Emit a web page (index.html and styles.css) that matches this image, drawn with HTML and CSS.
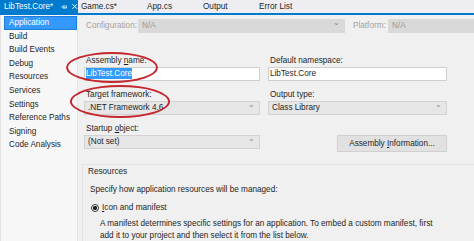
FILE: index.html
```html
<!DOCTYPE html>
<html lang="en">
<head>
    <meta charset="UTF-8">
    <title>LibTest.Core - Properties</title>
    <link rel="stylesheet" href="styles.css">
</head>
<body>

    <div class="tabs">
        <div class="tab active">
            <span>LibTest.Core*</span>
            <svg class="pin" width="8" height="6" viewBox="0 0 8 6"><path d="M0 3H3M3 1V5M3 1.5H7V4.5H3M3 3.5H7" stroke="#cfe6f7" stroke-width="1" fill="none"/></svg>
            <svg class="close" width="7" height="7" viewBox="0 0 7 7"><path d="M0.5 0.5L6.5 6.5M6.5 0.5L0.5 6.5" stroke="#fff" stroke-width="1.2"/></svg>
        </div>
        <div class="tab" style="width:65px">Game.cs*</div>
        <div class="tab" style="width:55px">App.cs</div>
        <div class="tab" style="width:55px">Output</div>
        <div class="tab">Error List</div>
    </div>

    <div class="main">
        <ul class="nav">
            <li class="selected">Application</li>
            <li>Build</li>
            <li>Build Events</li>
            <li>Debug</li>
            <li>Resources</li>
            <li>Services</li>
            <li>Settings</li>
            <li>Reference Paths</li>
            <li>Signing</li>
            <li>Code Analysis</li>
        </ul>

        <div class="content">
            <div class="config-row">
                <span class="dim config-label">Configuration:</span>
                <div class="combo disabled config-combo">N/A <span class="chev">&#8964;</span></div>
                <span class="dim platform-label">Platform:</span>
                <div class="combo disabled platform-combo">N/A</div>
            </div>

            <div class="form-grid">
                <div class="field">
                    <label>Assembly <u>n</u>ame:</label>
                    <div class="textbox"><span class="sel">LibTest.Core</span></div>
                </div>
                <div class="field">
                    <label>Default namespace:</label>
                    <div class="textbox">LibTest.Core</div>
                </div>
                <div class="field">
                    <label>Target framework:</label>
                    <div class="combo">.NET Framework 4.6 <span class="chev">&#8964;</span></div>
                </div>
                <div class="field">
                    <label>Output type:</label>
                    <div class="combo">Class Library <span class="chev">&#8964;</span></div>
                </div>
                <div class="field">
                    <label>Startup <u>o</u>bject:</label>
                    <div class="combo">(Not set) <span class="chev">&#8964;</span></div>
                </div>
                <div class="field button-cell">
                    <button>Assembly <u>I</u>nformation...</button>
                </div>
            </div>

            <div class="resources">
                <div class="group-title">Resources</div>
                <p class="lead">Specify how application resources will be managed:</p>
                <div class="radio-row">
                    <span class="radio"></span>
                    <span><u>I</u>con and manifest</span>
                </div>
                <p class="note">A manifest determines specific settings for an application. To embed a custom manifest, first<br>add it to your project and then select it from the list below.</p>
            </div>
        </div>
    </div>

    <div class="mark mark-name"></div>
    <div class="mark mark-framework"></div>

</body>
</html>
```

FILE: styles.css
```css
body {
    margin: 0;
    width: 474px;
    height: 241px;
    overflow: hidden;
    font-family: "Liberation Sans", Arial, sans-serif;
    font-size: 8.2px;
    color: #1e1e1e;
    background: #f0f0f0;
    position: relative;
}
u {
    text-decoration: underline;
    text-underline-offset: 1px;
}

/* document tabs */
.tabs {
    display: flex;
    height: 13px;
    background: #eeeef2;
    border-bottom: 2px solid #007acc;
    line-height: 13px;
    white-space: nowrap;
}
.tab {
    padding-left: 1px;
    color: #1e1e1e;
}
.tab.active {
    width: 74px;
    padding-left: 4px;
    margin-right: 2px;
    background: #007acc;
    color: #fff;
    display: flex;
    align-items: center;
}
.tab .pin {
    margin-left: 8px;
}
.tab .close {
    margin-left: 5px;
}

.main {
    display: flex;
    height: 226px;
}

/* left navigation */
.nav {
    list-style: none;
    margin: 0;
    padding: 1px 0 0 3px;
    background: #f7f7f7;
    border-left: 1px solid #e2e2e2;
    border-right: 1px solid #e2e2e2;
    box-sizing: border-box;
    width: 78px;
}
.nav li {
    height: 13.6px;
    line-height: 13.6px;
    padding-left: 5px;
    white-space: nowrap;
}
.nav li.selected {
    background: #3399ff;
    color: #fff;
    box-shadow: inset 0 0 0 1px #1f7fd8;
}

.content {
    flex: 1;
    padding: 4px 0 0 6px;
}

.config-row {
    display: flex;
    align-items: center;
    height: 13px;
}
.dim {
    color: #a2a2a2;
    white-space: nowrap;
    flex-shrink: 0;
}
.config-label {
    width: 52px;
    margin-left: 2px;
}
.platform-label {
    width: 35px;
}
.combo {
    position: relative;
    height: 12px;
    line-height: 12px;
    padding-left: 3px;
    background: #e6e6e6;
    border: 1px solid #d2d2d2;
    white-space: nowrap;
}
.combo .chev {
    position: absolute;
    right: 4px;
    top: -3px;
    color: #8a8a8a;
    font-size: 8px;
}
.combo.disabled {
    background: #d9d9d9;
    border-color: #d9d9d9;
    color: #9a9a9a;
}
.config-combo {
    width: 202px;
    margin-right: 8px;
}
.platform-combo {
    flex: 1;
}

.form-grid {
    display: grid;
    grid-template-columns: 176px 179px;
    column-gap: 8px;
    row-gap: 8px;
    margin-top: 23px;
}
.field label {
    display: block;
    height: 11px;
    line-height: 11px;
    margin: 0 0 1px 2px;
}
.textbox {
    height: 12px;
    line-height: 12px;
    background: #fff;
    border: 1px solid #cfcfcf;
    padding-left: 1px;
    white-space: nowrap;
}
.textbox .sel {
    background: #3399ff;
    color: #fff;
    padding: 1px 0;
}
.button-cell {
    display: flex;
    justify-content: flex-end;
    align-items: flex-end;
}
button {
    width: 110px;
    height: 17px;
    margin-bottom: -3px;
    font-family: inherit;
    font-size: 8.2px;
    color: #1e1e1e;
    background: #e1e1e1;
    border: 1px solid #d0d0d0;
    padding: 0;
}

/* resources group */
.resources {
    margin: 15px 0 0 -2px;
    border-top: 1px solid #e3e3e3;
    border-left: 1px solid #e3e3e3;
    padding: 1px 0 0 5px;
    height: 80px;
}
.group-title {
    line-height: 11px;
}
.lead {
    margin: 7px 0 0 2px;
    line-height: 11px;
}
.radio-row {
    display: flex;
    align-items: center;
    margin: 7px 0 0 3px;
    height: 11px;
}
.radio {
    width: 6px;
    height: 6px;
    border: 1px solid #333;
    border-radius: 50%;
    margin-right: 3px;
    background: radial-gradient(circle, #222 45%, #fff 55%);
}
.note {
    margin: 5px 0 0 12px;
    line-height: 12px;
    white-space: nowrap;
}

/* red annotation circles */
.mark {
    position: absolute;
    border: 2px solid #c4262d;
    border-radius: 50%;
    box-sizing: border-box;
}
.mark-name {
    left: 66px;
    top: 52px;
    width: 92px;
    height: 31px;
}
.mark-framework {
    left: 70px;
    top: 85px;
    width: 100px;
    height: 33px;
}
```
